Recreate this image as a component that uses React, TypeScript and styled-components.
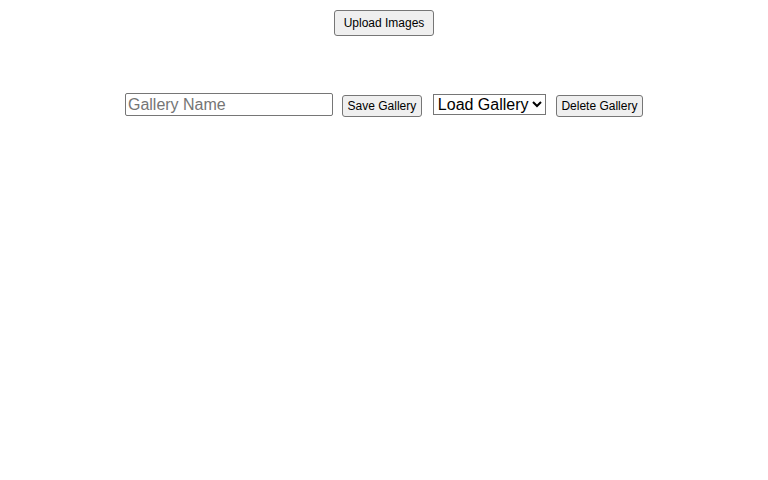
import React from "react";
import styled, { createGlobalStyle } from "styled-components";

const GlobalStyle = createGlobalStyle`
  html, body {
    margin: 0;
    padding: 0;
    background: #ffffff;
    font-family: "Liberation Sans", Arial, sans-serif;
  }
`;

const Page = styled.div`
  display: flex;
  flex-direction: column;
  align-items: center;
  padding-top: 10px;
  min-height: 480px;
  box-sizing: border-box;
`;

const ActionButton = styled.button<{ $size?: "large" | "small" }>`
  font-family: "Liberation Sans", Arial, sans-serif;
  font-size: 12px;
  line-height: 14px;
  color: #000000;
  background: #efefef;
  border: 1px solid #767676;
  border-radius: 3px;
  padding: ${(p) => (p.$size === "large" ? "5px 8.5px" : "3px 4.6px")};
  margin: 0;
  cursor: pointer;
`;

const GalleryBar = styled.div`
  display: flex;
  align-items: baseline;
  justify-content: center;
  gap: 10px;
  margin-top: 57px;
`;

const NameInput = styled.input`
  font-family: "Liberation Sans", Arial, sans-serif;
  font-size: 16px;
  line-height: 19px;
  width: 208px;
  box-sizing: border-box;
  padding: 1px 2px;
  margin: 0 -1px 0 0;
  border: 1px solid #767676;
  border-radius: 2px;
  color: #000000;
  background: #ffffff;
  &::placeholder {
    color: #757575;
  }
`;

const GallerySelect = styled.select`
  font-family: "Liberation Sans", Arial, sans-serif;
  font-size: 16px;
  color: #000000;
  background: #ffffff;
  border: 1px solid #767676;
  border-radius: 0;
  margin: 0 0 0 1px;
`;

export default function App() {
  return (
    <>
      <GlobalStyle />
      <Page>
        <ActionButton $size="large">Upload Images</ActionButton>
        <GalleryBar>
          <NameInput type="text" placeholder="Gallery Name" />
          <ActionButton>Save Gallery</ActionButton>
          <GallerySelect defaultValue="">
            <option value="">Load Gallery</option>
          </GallerySelect>
          <ActionButton>Delete Gallery</ActionButton>
        </GalleryBar>
      </Page>
    </>
  );
}
